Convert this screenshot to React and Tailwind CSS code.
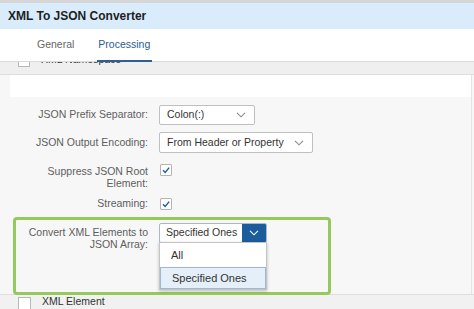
import React from "react";

function Chevron({ color = "#8a8a8a" }) {
  return (
    <svg width="10" height="6" viewBox="0 0 10 6" fill="none">
      <polyline points="1,0.8 5,4.8 9,0.8" stroke={color} strokeWidth="1.1" fill="none" />
    </svg>
  );
}

function Check() {
  return (
    <div className="w-[12px] h-[12px] bg-white border border-[#b4b4b4] rounded-[1px] flex items-center justify-center">
      <svg width="10" height="10" viewBox="0 0 10 10" fill="none">
        <polyline points="2,5.2 4.2,7.4 8.2,2.6" stroke="#1f5a98" strokeWidth="1.4" fill="none" />
      </svg>
    </div>
  );
}

function Select({ value, width }) {
  return (
    <div className={`flex items-center justify-between bg-white border border-[#bfbfbf] rounded-[2px] h-full pl-[7px] pr-[8px] text-[#333] ${width}`}>
      <span>{value}</span>
      <Chevron />
    </div>
  );
}

export default function App() {
  return (
    <div className="relative w-[474px] h-[309px] overflow-hidden bg-[#f7f7f7] text-[10.5px] font-['Liberation_Sans',Arial,sans-serif] flex flex-col">
      <div className="h-[3px] bg-[#d6d6d6]" />
      <div className="h-[26px] bg-[#d9ecfb] flex items-center pl-[8px] font-bold text-[12px] text-[#1e1e1e]">
        XML To JSON Converter
      </div>
      <div className="h-[33px] bg-white border-b border-[#dcdcdc] flex pl-[37px] gap-[24px]">
        <div className="flex items-center text-[#666]">General</div>
        <div className="relative flex items-center text-[#2a5c92]">
          Processing
          <div className="absolute bottom-[-1px] left-[-1px] right-[-2px] h-[2px] bg-[#2e5f91]" />
        </div>
      </div>
      <div className="h-[13px] bg-[#efefef] border-b border-[#dedede] overflow-hidden flex items-start pl-[18px] gap-[11px]">
        <div className="mt-[-7px] w-[12px] h-[12px] bg-white border border-[#b8b8b8] shrink-0" />
        <div className="mt-[-10px] text-[#333]">XML Namespace</div>
      </div>
      <div className="flex-1 flex pl-[10px] pr-[2px]">
        <div className="flex-1 flex flex-col border-r border-[#e4e4e4]">
          <div className="h-[22px] bg-white" />
          <div className="flex flex-col pt-[8px]">
            <div className="flex h-[20px] items-center">
              <div className="w-[138px] text-right text-[#5e5e5e]">JSON Prefix Separator:</div>
              <div className="ml-[11px] h-full">
                <Select value="Colon(:)" width="w-[96px]" />
              </div>
            </div>
            <div className="flex h-[21px] items-center mt-[7px]">
              <div className="w-[138px] text-right text-[#5e5e5e]">JSON Output Encoding:</div>
              <div className="ml-[11px] h-full">
                <Select value="From Header or Property" width="w-[154px]" />
              </div>
            </div>
            <div className="flex items-start mt-[11px]">
              <div className="w-[138px] text-right text-[#5e5e5e] leading-[12px] pt-[1px]">
                Suppress JSON Root
                <br />
                Element:
              </div>
              <div className="ml-[12px]">
                <Check />
              </div>
            </div>
            <div className="flex h-[12px] items-center mt-[9px]">
              <div className="w-[138px] text-right text-[#5e5e5e]">Streaming:</div>
              <div className="ml-[12px]">
                <Check />
              </div>
            </div>
            <div className="flex items-start mt-[13px]">
              <div className="w-[138px] text-right text-[#5e5e5e] leading-[12px] pt-[3px]">
                Convert XML Elements to
                <br />
                JSON Array:
              </div>
              <div className="ml-[11px] h-[20px] w-[108px] flex bg-white border border-[#a9b8c8] rounded-[2px] overflow-hidden">
                <div className="flex-1 flex items-center pl-[6px] text-[#333]">Specified Ones</div>
                <div className="w-[24px] bg-[#1b5c9d] flex items-center justify-center">
                  <Chevron color="#ffffff" />
                </div>
              </div>
            </div>
          </div>
        </div>
      </div>
      <div className="h-[15px] bg-[#f1f1f1] border-t border-[#dddddd] overflow-hidden flex items-start pl-[18px] gap-[11px]">
        <div className="mt-[2px] w-[13px] h-[13px] bg-white border border-[#b8b8b8] shrink-0" />
        <div className="mt-[-1px] text-[#333]">XML Element</div>
      </div>

      <div className="absolute left-[13px] top-[217px] w-[318px] h-[78px] border-[3px] border-[#95c95c] rounded-[4px]" />

      <div className="absolute left-[159px] top-[242px] w-[108px] h-[48px] bg-white border border-[#c4c4c4] shadow-[0_1px_3px_rgba(0,0,0,0.25)] flex flex-col text-[11px] text-[#333]">
        <div className="h-[24px] flex items-center pl-[11px]">All</div>
        <div className="h-[22px] flex items-center pl-[11px] bg-[#e4eff9] border border-[#9db7d4]">Specified Ones</div>
      </div>
    </div>
  );
}
